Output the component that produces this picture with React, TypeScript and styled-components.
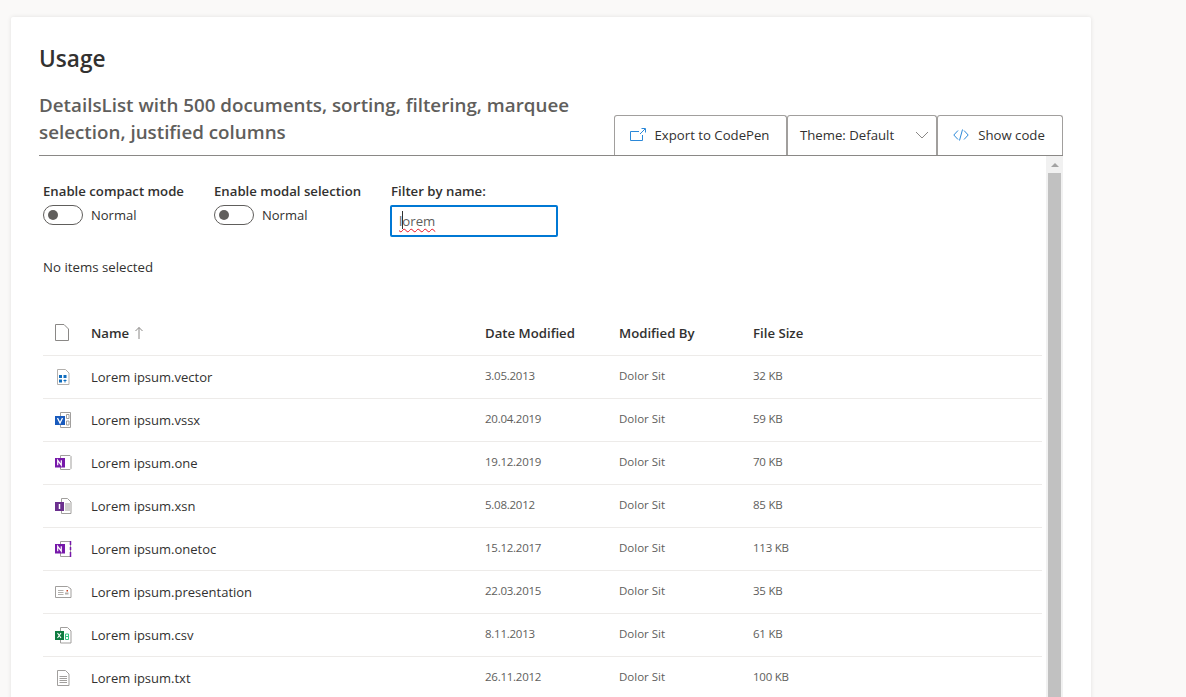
import React from 'react';
import styled, { createGlobalStyle } from 'styled-components';

const GlobalStyle = createGlobalStyle`
  html, body {
    margin: 0;
    height: 100%;
    overflow: hidden;
    background: #faf9f8;
    font-family: "Open Sans", "Noto Sans", sans-serif;
    color: #323130;
  }
  #root {
    height: 100%;
  }
`;

const Page = styled.div`
  height: 697px;
  padding: 17px 95px 0 11px;
  box-sizing: border-box;
  overflow: hidden;
`;

const Card = styled.section`
  background: #fff;
  height: 720px;
  padding: 28px 28px 0;
  border-radius: 2px;
  box-sizing: border-box;
  box-shadow: 0 0 4px rgba(0, 0, 0, 0.1);
`;

const Title = styled.h1`
  margin: 0;
  font-size: 22.6px;
  line-height: 28px;
  font-weight: 550;
  color: #323130;
`;

const HeaderRow = styled.div`
  display: flex;
  justify-content: space-between;
  align-items: flex-end;
  margin-top: 19px;
  border-bottom: 1px solid #8a8886;
`;

const Subheading = styled.h2`
  margin: 0 0 9px;
  width: 540px;
  font-size: 18.8px;
  line-height: 27px;
  font-weight: 550;
  color: #605e5c;
`;

const Tabs = styled.div`
  display: flex;
`;

const Tab = styled.div<{ $width: number }>`
  width: ${(p) => p.$width}px;
  height: 40px;
  box-sizing: border-box;
  display: flex;
  align-items: center;
  justify-content: center;
  gap: 9px;
  padding: 0 2px 2px 0;
  border: 1px solid #a19f9d;
  border-bottom: none;
  border-radius: 3px 3px 0 0;
  font-size: 13.2px;
  color: #323130;
`;

const ThemeTab = styled(Tab)`
  justify-content: space-between;
  padding: 0 7px 2px 12px;
`;

const Body = styled.div`
  display: flex;
  height: 560px;
`;

const Content = styled.div`
  flex: 1;
  padding: 25px 4px 0 4px;
  min-width: 0;
`;

const ScrollTrack = styled.div`
  width: 17px;
  background: #f1f1f1;
  display: flex;
  flex-direction: column;
  align-items: center;
`;

const ScrollArrow = styled.div`
  height: 17px;
  width: 100%;
  display: flex;
  align-items: center;
  justify-content: center;
  &::before {
    content: '';
    border-left: 4px solid transparent;
    border-right: 4px solid transparent;
    border-bottom: 4px solid #a3a3a3;
  }
`;

const ScrollThumb = styled.div`
  width: 13px;
  flex: 1;
  background: #c1c1c1;
`;

const Controls = styled.div`
  display: flex;
  align-items: flex-start;
`;

const Control = styled.div<{ $width: number }>`
  width: ${(p) => p.$width}px;
`;

const Label = styled.div`
  font-size: 13.2px;
  line-height: 20px;
  font-weight: 550;
  color: #323130;
  white-space: nowrap;
`;

const ToggleRow = styled.div`
  display: flex;
  align-items: center;
  gap: 8px;
  margin-top: 4px;
  font-size: 13px;
  line-height: 20px;
`;

const Toggle = styled.div`
  width: 40px;
  height: 20px;
  box-sizing: border-box;
  border: 1px solid #605e5c;
  border-radius: 10px;
  padding: 4px;
  &::before {
    content: '';
    display: block;
    width: 10px;
    height: 10px;
    border-radius: 50%;
    background: #605e5c;
  }
`;

const Filter = styled.div`
  position: relative;
  width: 168px;
  height: 32px;
  margin-top: 4px;
  margin-left: -1px;
  box-sizing: border-box;
  border: 2px solid #0078d4;
  border-radius: 2px;
  padding: 0 7px;
  font-size: 13.2px;
  line-height: 29px;
  color: #605e5c;
`;

const Misspelled = styled.span`
  text-decoration: underline wavy #e81123 1px;
  text-underline-offset: 2px;
`;

const Caret = styled.i`
  position: absolute;
  left: 10px;
  top: 4px;
  width: 1px;
  height: 18px;
  background: #323130;
`;

const Status = styled.div`
  margin-top: 20px;
  font-size: 13.25px;
  line-height: 20px;
  color: #323130;
`;

const Table = styled.div`
  width: 999px;
  margin-top: 35px;
`;

const Row = styled.div`
  display: grid;
  grid-template-columns: 48px 394px 134px 134px 1fr;
  align-items: center;
  height: 42px;
  border-bottom: 1px solid #edebe9;
  font-size: 11.5px;
  color: #605e5c;
`;

const HeaderCells = styled(Row)`
  height: 41px;
  padding-bottom: 2px;
  font-size: 13.2px;
  font-weight: 550;
  color: #323130;
`;

const IconCell = styled.div`
  display: flex;
  justify-content: flex-start;
  padding-left: 11px;
`;

const HeaderIconCell = styled(IconCell)`
  padding-left: 12px;
`;

const NameHeader = styled.div`
  display: flex;
  align-items: center;
  gap: 5px;
`;

const NameCell = styled.div`
  font-size: 13px;
  color: #323130;
`;

const MetaCell = styled.div<{ $tight?: boolean }>`
  padding-bottom: 4px;
  letter-spacing: ${(p) => (p.$tight ? '-0.25px' : 'normal')};
`;

const DocIcon = styled.svg`
  width: 20px;
  height: 20px;
  display: block;
`;

const icons: Record<string, React.ReactNode> = {
  vector: (
    <>
      <path d="M3.500 2.500h8l3.500 3.500v11.500H3.500z" fill="#fff" stroke="#b3b0ad" />
      <path d="M5 8h3v3H5zM9.500 8h3v3h-3zM5 12.500h3v3H5z" fill="#0f6cbd" />
      <path d="M9.500 13.500h3M11 12.500v3" stroke="#0f6cbd" />
    </>
  ),
  vssx: (
    <>
      <path d="M6.500 2.500h10v15h-10z" fill="#fff" stroke="#a19f9d" />
      <path d="M12.500 4.500h2.500v4h-2.500zM12.500 11h2.500v4h-2.500z" fill="#fff" stroke="#a19f9d" />
      <rect x="1" y="6" width="10" height="9" fill="#185abd" />
      <path d="M3.500 8l2.500 5 2.500-5" fill="none" stroke="#fff" strokeWidth="1.300" />
    </>
  ),
  one: (
    <>
      <path d="M6.500 2.500h9.500l1 1v12l-1 1h-9.500z" fill="#fff" stroke="#a19f9d" />
      <rect x="1" y="5" width="10" height="9.500" fill="#7719aa" />
      <path d="M3.700 12.200V7.300l3.600 4.900V7.300" fill="none" stroke="#fff" strokeWidth="1.200" />
    </>
  ),
  xsn: (
    <>
      <path d="M7.500 2.500h6l3.500 3.500v11.500H7.500z" fill="#fff" stroke="#a19f9d" />
      <path d="M11 8h5M11 10h5M11 12h5M11 14h5" stroke="#a19f9d" />
      <rect x="1" y="6" width="9" height="9" fill="#6b2f8e" />
      <path d="M5.500 8v5" stroke="#fff" strokeWidth="1.500" />
    </>
  ),
  onetoc: (
    <>
      <path d="M6.500 2.500h10v15h-10z" fill="#fff" stroke="#a19f9d" />
      <path d="M16.500 2v4M16.500 8v3M16.500 13v5" stroke="#7719aa" strokeWidth="1.500" />
      <rect x="1" y="5" width="10" height="9.500" fill="#7719aa" />
      <path d="M3.700 12.200V7.300l3.600 4.900V7.300" fill="none" stroke="#fff" strokeWidth="1.200" />
    </>
  ),
  presentation: (
    <>
      <path d="M1.500 4.500h12l3.500 2.500v8.500H1.500z" fill="#fff" stroke="#a19f9d" />
      <path d="M4 8.500h5.500M4 10.500h5.500M4 12.500h5.500" stroke="#b3b0ad" />
      <path d="M11 10.500h3.500v2H11z" fill="#b3b0ad" />
      <rect x="12.500" y="8" width="1.500" height="1.500" fill="#c43e1c" />
    </>
  ),
  csv: (
    <>
      <path d="M6.500 2.500h7l3.500 3.500v12H6.500z" fill="#fff" stroke="#a19f9d" />
      <rect x="1" y="6" width="9" height="9" fill="#107c41" />
      <path d="M3.500 8l3.500 5M7 8l-3.500 5" stroke="#fff" strokeWidth="1.100" />
      <path d="M11.500 9h3v5.500h-3zM11.500 11.500h3" fill="none" stroke="#33c481" />
    </>
  ),
  txt: (
    <>
      <path d="M3.500 2.500h8l3.500 3.500v11.500H3.500z" fill="#fff" stroke="#a19f9d" />
      <path d="M5.500 8.500h7.500M5.500 10.500h7.500M5.500 12.500h7.500M5.500 14.500h7.500" stroke="#a19f9d" />
    </>
  ),
};

const rows = [
  { icon: 'vector', name: 'Lorem ipsum.vector', date: '3.05.2013', size: '32 KB' },
  { icon: 'vssx', name: 'Lorem ipsum.vssx', date: '20.04.2019', size: '59 KB' },
  { icon: 'one', name: 'Lorem ipsum.one', date: '19.12.2019', size: '70 KB' },
  { icon: 'xsn', name: 'Lorem ipsum.xsn', date: '5.08.2012', size: '85 KB' },
  { icon: 'onetoc', name: 'Lorem ipsum.onetoc', date: '15.12.2017', size: '113 KB' },
  { icon: 'presentation', name: 'Lorem ipsum.presentation', date: '22.03.2015', size: '35 KB' },
  { icon: 'csv', name: 'Lorem ipsum.csv', date: '8.11.2013', size: '61 KB' },
  { icon: 'txt', name: 'Lorem ipsum.txt', date: '26.11.2012', size: '100 KB' },
];

const App: React.FC = () => {
  return (
    <Page>
      <GlobalStyle />
      <Card>
        <Title>Usage</Title>
        <HeaderRow>
          <Subheading>DetailsList with 500 documents, sorting, filtering, marquee selection, justified columns</Subheading>
          <Tabs>
            <Tab $width={173}>
              <svg width="16" height="16" viewBox="0 0 16 16" fill="none" stroke="#2b88d8">
                <path d="M9 4.500H.5v9h12V8" />
                <path d="M10 7l5-5M11.500 1.500h4v4" />
              </svg>
              Export to CodePen
            </Tab>
            <ThemeTab $width={150}>
              Theme: Default
              <svg width="14" height="14" viewBox="0 0 14 14" fill="none" stroke="#8a8886">
                <path d="M1 4l6 6 6-6" />
              </svg>
            </ThemeTab>
            <Tab $width={126}>
              <svg width="16" height="16" viewBox="0 0 16 16" fill="none" stroke="#2b88d8">
                <path d="M5 3.500L.8 8 5 12.500M11 3.500L15.200 8 11 12.500M9.500 2.500l-3 11" />
              </svg>
              Show code
            </Tab>
          </Tabs>
        </HeaderRow>
        <Body>
          <Content>
            <Controls>
              <Control $width={171}>
                <Label>Enable compact mode</Label>
                <ToggleRow>
                  <Toggle />
                  Normal
                </ToggleRow>
              </Control>
              <Control $width={177}>
                <Label>Enable modal selection</Label>
                <ToggleRow>
                  <Toggle />
                  Normal
                </ToggleRow>
              </Control>
              <Control $width={168}>
                <Label>Filter by name:</Label>
                <Filter>
                  <Misspelled>lorem</Misspelled>
                  <Caret />
                </Filter>
              </Control>
            </Controls>
            <Status>No items selected</Status>
            <Table>
              <HeaderCells>
                <HeaderIconCell>
                  <svg width="14" height="17" viewBox="0 0 14 17" fill="none" stroke="#8a8886">
                    <path d="M.5.500h8.500l4.500 4.500v11.500H.5z" />
                  </svg>
                </HeaderIconCell>
                <NameHeader>
                  Name
                  <svg width="10" height="14" viewBox="0 0 10 14" fill="none" stroke="#8a8886">
                    <path d="M5 13V1.500M1.500 5L5 1.500 8.500 5" />
                  </svg>
                </NameHeader>
                <div>Date Modified</div>
                <div>Modified By</div>
                <div>File Size</div>
              </HeaderCells>
              {rows.map((row) => (
                <Row key={row.name}>
                  <IconCell>
                    <DocIcon viewBox="0 0 20 20">{icons[row.icon]}</DocIcon>
                  </IconCell>
                  <NameCell>{row.name}</NameCell>
                  <MetaCell $tight>{row.date}</MetaCell>
                  <MetaCell>Dolor Sit</MetaCell>
                  <MetaCell $tight>{row.size}</MetaCell>
                </Row>
              ))}
            </Table>
          </Content>
          <ScrollTrack>
            <ScrollArrow />
            <ScrollThumb />
          </ScrollTrack>
        </Body>
      </Card>
    </Page>
  );
};

export default App;
